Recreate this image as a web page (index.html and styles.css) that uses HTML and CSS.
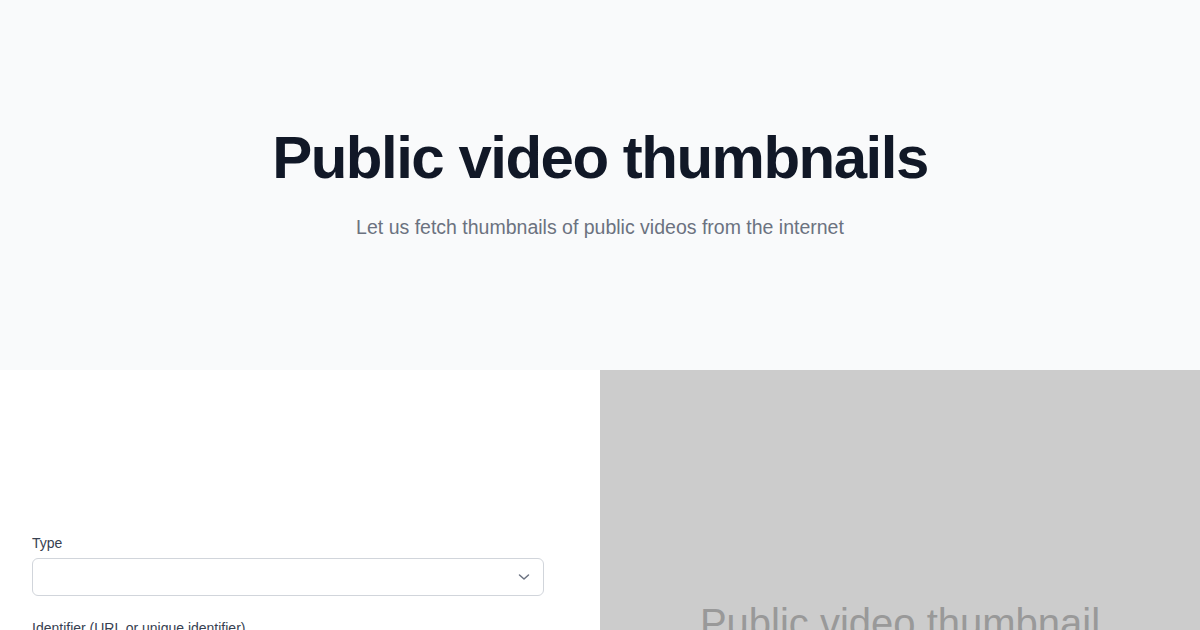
FILE: index.html
```html
<!DOCTYPE html>
<html lang="en">
<head>
    <meta charset="UTF-8">
    <meta name="viewport" content="width=device-width, initial-scale=1.0">
    <title>Public video thumbnails</title>
    <link rel="stylesheet" href="styles.css">
</head>
<body>

    <!-- Hero -->
    <header class="hero">
        <h1 class="hero-title">Public video thumbnails</h1>
        <p class="hero-sub">Let us fetch thumbnails of public videos from the internet</p>
    </header>

    <main class="tool">
        <section class="tool-form">
            <form class="form">
                <div class="field">
                    <label class="field-label" for="type">Type</label>
                    <div class="select-wrap">
                        <select id="type" class="select"></select>
                        <svg class="select-icon" width="12" height="8" viewBox="0 0 12 8" fill="none" stroke="#6b7280" stroke-width="1.5" stroke-linecap="round" stroke-linejoin="round">
                            <path d="M1.5 2l4.5 4 4.5-4"/>
                        </svg>
                    </div>
                </div>
                <div class="field">
                    <label class="field-label" for="identifier">Identifier (URL or unique identifier)</label>
                    <input id="identifier" class="input" type="text">
                </div>
            </form>
        </section>

        <section class="tool-preview">
            <span class="preview-text">Public video thumbnail</span>
        </section>
    </main>

</body>
</html>
```

FILE: styles.css
```css
/* Genel */
body {
    margin: 0;
    font-family: 'Liberation Sans', Arial, Helvetica, sans-serif;
    background-color: #fff;
    color: #111827;
}

/* Hero bölümü */
.hero {
    height: 370px;
    background-color: #f9fafb;
    box-sizing: border-box;
    padding-top: 128px;
    text-align: center;
}

.hero-title {
    margin: 0;
    font-size: 60px;
    font-weight: 700;
    letter-spacing: -1.5px;
    color: #111827;
    line-height: 1;
}

.hero-sub {
    margin: 28px 0 0;
    font-size: 19.5px;
    color: #6b7280;
}

/* Form + önizleme */
.tool {
    display: grid;
    grid-template-columns: 1fr 1fr;
}

.tool-form {
    padding: 165px 32px 0;
}

.form {
    max-width: 512px;
}

.field {
    margin-bottom: 24px;
}

.field-label {
    display: block;
    font-size: 14px;
    color: #374151;
    margin-bottom: 7px;
}

.select-wrap {
    position: relative;
}

.select,
.input {
    width: 100%;
    height: 38px;
    box-sizing: border-box;
    border: 1px solid #d1d5db;
    border-radius: 6px;
    background: #fff;
    appearance: none;
    font: inherit;
    padding: 0 12px;
}

.select-icon {
    position: absolute;
    right: 14px;
    top: 15px;
    pointer-events: none;
}

.tool-preview {
    background-color: #cccccc;
    display: flex;
    align-items: center;
    justify-content: center;
    height: 506px;
}

.preview-text {
    font-size: 40px;
    color: #999;
}
```
